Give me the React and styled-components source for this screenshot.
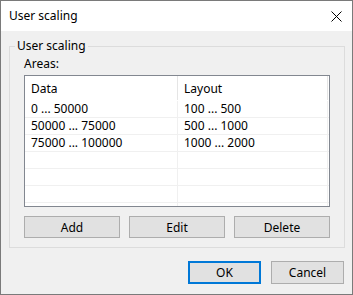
import React from "react";
import styled, { createGlobalStyle } from "styled-components";

const GlobalStyle = createGlobalStyle`
  html, body {
    margin: 0;
    padding: 0;
    background: #ffffff;
  }
  body {
    font-family: "Noto Sans", "Liberation Sans", sans-serif;
    font-size: 12px;
    color: #000000;
  }
`;

const Window = styled.div`
  width: 353px;
  height: 295px;
  box-sizing: border-box;
  border: 1px solid #7a7a7a;
  background: #f0f0f0;
  display: flex;
  flex-direction: column;
`;

const TitleBar = styled.div`
  height: 30px;
  background: #ffffff;
  display: flex;
  align-items: center;
  justify-content: space-between;
  padding: 0 10px 0 8px;
  flex-shrink: 0;
`;

const Title = styled.span`
  font-size: 12px;
  line-height: 16px;
  color: #000000;
`;

const CloseButton = styled.button`
  width: 12px;
  height: 12px;
  padding: 0;
  border: none;
  background: none;
  display: flex;
  align-items: center;
  justify-content: center;
  cursor: pointer;
`;

const Body = styled.div`
  flex: 1;
  display: flex;
  flex-direction: column;
  padding: 7px 7px 0 8px;
`;

const GroupBox = styled.fieldset`
  width: 336px;
  box-sizing: border-box;
  margin: 0;
  padding: 2px 14px 9px 14px;
  border: 1px solid #dcdcdc;
  min-inline-size: 0;
`;

const Legend = styled.legend`
  margin-left: -9px;
  padding: 0 2px;
  line-height: 16px;
  font-size: 12px;
`;

const Label = styled.div`
  line-height: 16px;
  margin-bottom: 3px;
`;

const ListView = styled.div`
  height: 132px;
  box-sizing: border-box;
  border: 1px solid #828790;
  background: #ffffff;
  overflow: hidden;
`;

const Row = styled.div`
  display: grid;
  grid-template-columns: 153px 150px;
  height: ${(p) => (p.$header ? "25px" : "17px")};
  box-sizing: border-box;
  border-bottom: 1px solid ${(p) => (p.$header ? "transparent" : "#f0f0f0")};
`;

const Cell = styled.div`
  padding-left: 6px;
  display: flex;
  align-items: center;
  box-sizing: border-box;
  line-height: 16px;
  white-space: nowrap;
  border-right: 1px solid ${(p) => (p.$header ? "#e5e5e5" : "#f0f0f0")};
  padding-top: ${(p) => (p.$header ? "1px" : "0")};
`;

const ButtonRow = styled.div`
  display: flex;
  justify-content: space-between;
  margin-top: 9px;
`;

const Button = styled.button`
  width: ${(p) => p.$width || "96px"};
  height: ${(p) => p.$height || "22px"};
  box-sizing: border-box;
  background: #e1e1e1;
  border: ${(p) => (p.$default ? "2px solid #0078d7" : "1px solid #adadad")};
  font-family: "Noto Sans", "Liberation Sans", sans-serif;
  font-size: 12px;
  color: #000000;
  padding: 0;
  cursor: pointer;
`;

const Footer = styled.div`
  display: flex;
  justify-content: flex-end;
  gap: 10px;
  margin-top: 13px;
  padding-right: 1px;
`;

const rows = [
  ["0 ... 50000", "100 ... 500"],
  ["50000 ... 75000", "500 ... 1000"],
  ["75000 ... 100000", "1000 ... 2000"],
  ["", ""],
  ["", ""],
  ["", ""],
  ["", ""],
];

export default function App() {
  return (
    <>
      <GlobalStyle />
      <Window>
        <TitleBar>
          <Title>User scaling</Title>
          <CloseButton aria-label="Close">
            <svg width="11" height="11" viewBox="0 0 11 11">
              <path d="M0.5 0.5 L10.5 10.5 M10.5 0.5 L0.5 10.5" stroke="#000" strokeWidth="1" fill="none" />
            </svg>
          </CloseButton>
        </TitleBar>
        <Body>
          <GroupBox>
            <Legend>User scaling</Legend>
            <Label>Areas:</Label>
            <ListView>
              <Row $header>
                <Cell $header>Data</Cell>
                <Cell $header>Layout</Cell>
              </Row>
              {rows.map((r, i) => (
                <Row key={i}>
                  <Cell>{r[0]}</Cell>
                  <Cell>{r[1]}</Cell>
                </Row>
              ))}
            </ListView>
            <ButtonRow>
              <Button>Add</Button>
              <Button>Edit</Button>
              <Button>Delete</Button>
            </ButtonRow>
          </GroupBox>
          <Footer>
            <Button $default $width="73px" $height="23px">OK</Button>
            <Button $width="73px" $height="23px">Cancel</Button>
          </Footer>
        </Body>
      </Window>
    </>
  );
}
